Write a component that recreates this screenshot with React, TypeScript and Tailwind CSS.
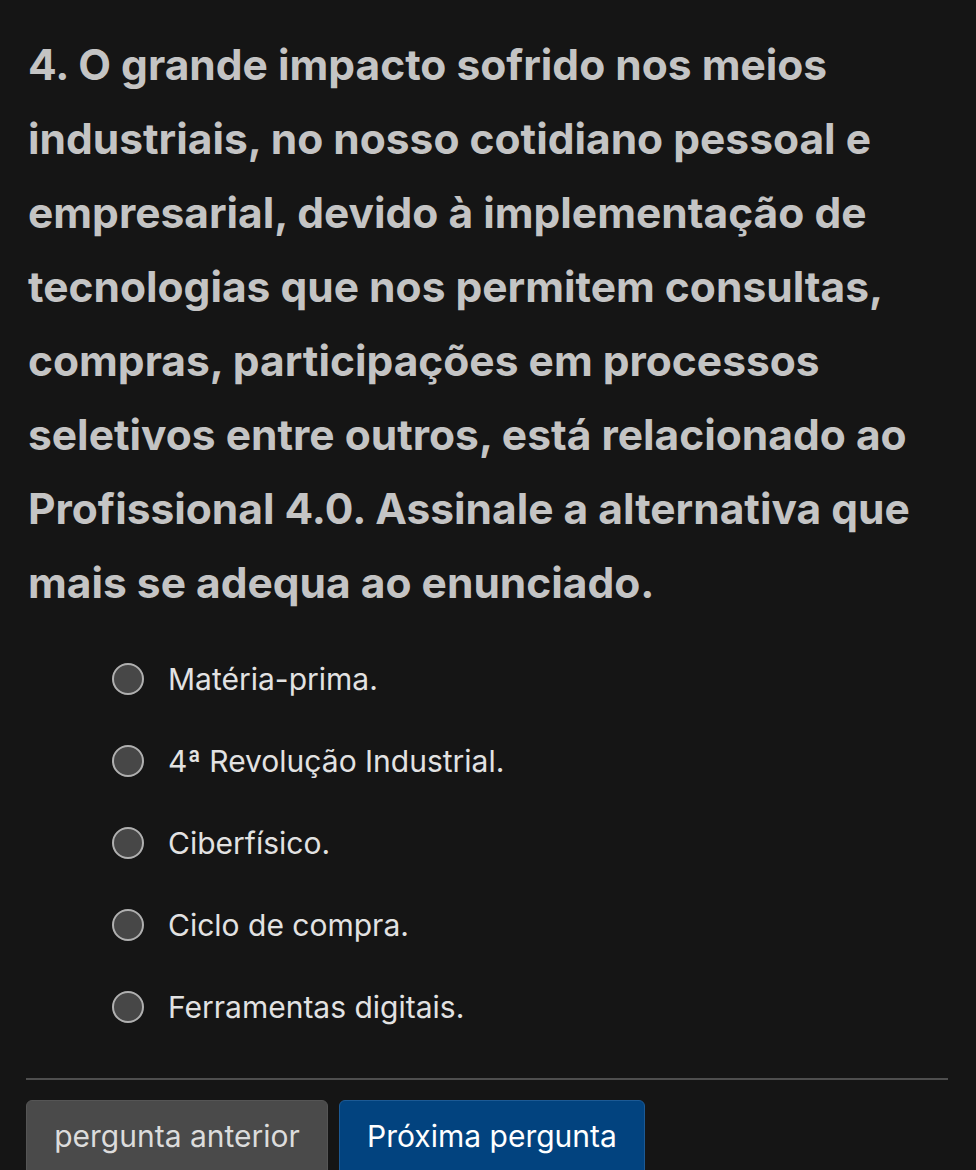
const options = [
  'Matéria-prima.',
  '4ª Revolução Industrial.',
  'Ciberfísico.',
  'Ciclo de compra.',
  'Ferramentas digitais.',
]

export default function App() {
  return (
    <div
      className="min-h-[1170px] w-full overflow-hidden bg-[#151515]"
      style={{ fontFamily: 'Inter, "Noto Sans", sans-serif' }}
    >
      <div className="px-[26px] pt-[28px]">
        <h1 className="pl-[2px] text-[42.5px] font-bold leading-[74px] text-[#c4c4c4]">
          4. O grande impacto sofrido nos meios industriais, no nosso cotidiano
          pessoal e empresarial, devido à implementação de tecnologias que nos
          permitem consultas, compras, participações em processos seletivos entre
          outros, está relacionado ao Profissional 4.0. Assinale a alternativa que
          mais se adequa ao enunciado.
        </h1>

        <div className="mt-[18px] flex flex-col pl-[86px]">
          {options.map((opt) => (
            <label
              key={opt}
              className="flex h-[82px] cursor-pointer items-center gap-[24px]"
            >
              <span className="h-[32px] w-[32px] shrink-0 rounded-full border-2 border-[#b0b0b0] bg-[#474747]"></span>
              <span className="text-[30px] text-[#e2e2e2]">{opt}</span>
            </label>
          ))}
        </div>

        <div className="mt-[30px] h-[2px] w-[922px] bg-[#4e4e4e]"></div>

        <div className="mt-[20px] flex gap-[11px]">
          <button className="h-[80px] w-[302px] rounded-[6px] border border-[#555] bg-[#4a4a4a] pb-[8px] text-[30px] text-[#dcdcdc]">
            pergunta anterior
          </button>
          <button className="h-[80px] w-[306px] rounded-[6px] border border-[#1c5a95] bg-[#02437f] pb-[8px] text-[30px] text-white">
            Próxima pergunta
          </button>
        </div>
      </div>
    </div>
  )
}
